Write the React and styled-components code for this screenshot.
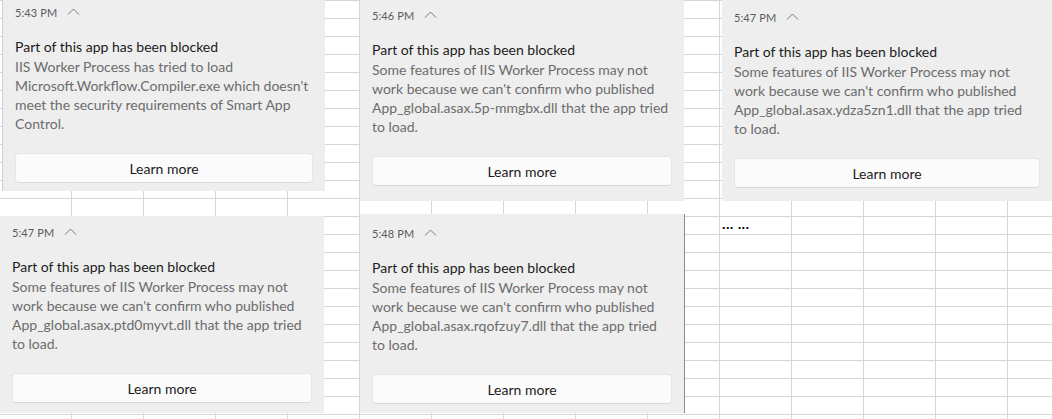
import React from "react";
import styled, { createGlobalStyle } from "styled-components";

const Global = createGlobalStyle`
  html, body { margin: 0; padding: 0; background: #ffffff; }
  body { width: 1052px; height: 419px; overflow: hidden; }
  #root { width: 1052px; height: 419px; }
`;

const GRID = "#d6d6d6";

/* Spreadsheet backdrop: 72px columns, 18px rows */
const Sheet = styled.div`
  width: 1052px;
  height: 419px;
  box-sizing: border-box;
  background-color: #ffffff;
  background-image:
    linear-gradient(to bottom, ${GRID} 0 1px, transparent 1px 18px),
    linear-gradient(to right, ${GRID} 0 1px, transparent 1px 72px);
  background-size: 100% 18px, 72px 100%;
  background-position: 0 0, 71px 0;
  display: grid;
  grid-template-columns: 360px 362px 330px;
  grid-template-rows: 214px 205px;
  align-items: start;
  font-family: "Segoe UI", Lato, "Noto Sans", sans-serif;
  overflow: hidden;
`;

const Card = styled.section`
  box-sizing: border-box;
  width: ${(p) => p.$w}px;
  height: ${(p) => p.$h}px;
  margin-left: ${(p) => p.$ml || 0}px;
  margin-top: ${(p) => p.$mt || 0}px;
  padding: ${(p) => p.$pt}px 12px 0 12px;
  background: #eeeeee;
  border-left: ${(p) => (p.$leftEdge ? "1px solid #cfcfcf" : "none")};
  border-right: ${(p) => (p.$rightEdge ? `1px solid ${p.$rightEdge}` : "none")};
  display: flex;
  flex-direction: column;
  overflow: hidden;
`;

const TimeRow = styled.div`
  display: flex;
  align-items: center;
  gap: 10px;
  height: 16px;
  font-size: 11px;
  color: #5a5a5a;
  letter-spacing: 0.1px;
`;

const Chevron = styled.svg`
  width: 13px;
  height: 7px;
  flex: none;
  margin-top: -1px;
`;

const Title = styled.h3`
  margin: 17px 0 0 0;
  font-size: 14px;
  line-height: 20px;
  font-weight: 400;
  color: #1b1b1b;
  white-space: nowrap;
`;

const Body = styled.p`
  margin: 0;
  font-size: 14px;
  line-height: 19px;
  color: #6c6c6c;
`;

const Line = styled.span`
  display: block;
  white-space: nowrap;
`;

const LearnButton = styled.button`
  margin-top: 20px;
  height: 30px;
  width: 100%;
  flex: none;
  box-sizing: border-box;
  border: 1px solid #e6e6e6;
  border-bottom-color: #d8d8d8;
  border-radius: 4px;
  background: #fbfbfb;
  font-family: inherit;
  font-size: 14px;
  color: #1b1b1b;
  padding: 0;
  cursor: pointer;
`;

const CellNote = styled.div`
  margin-top: 4px;
  font-family: "Liberation Sans", Arial, sans-serif;
  font-size: 13px;
  font-weight: 700;
  line-height: 14px;
  color: #000000;
  letter-spacing: 0.3px;
`;

const notices = [
  {
    time: "5:43 PM",
    lines: [
      "IIS Worker Process has tried to load",
      "Microsoft.Workflow.Compiler.exe which doesn't",
      "meet the security requirements of Smart App",
      "Control.",
    ],
    box: { $w: 323, $h: 191, $ml: 2, $pt: 4, $leftEdge: true },
  },
  {
    time: "5:46 PM",
    dll: "App_global.asax.5p-mmgbx.dll",
    box: { $w: 324, $h: 201, $pt: 7 },
  },
  {
    time: "5:47 PM",
    dll: "App_global.asax.ydza5zn1.dll",
    box: { $w: 330, $h: 201, $pt: 9 },
  },
  {
    time: "5:47 PM",
    dll: "App_global.asax.ptd0myvt.dll",
    box: { $w: 324, $h: 197, $mt: 2, $pt: 8 },
  },
  {
    time: "5:48 PM",
    dll: "App_global.asax.rqofzuy7.dll",
    box: { $w: 325, $h: 199, $pt: 11, $rightEdge: "#8c8c8c" },
  },
];

const bodyFor = (n) =>
  n.lines || [
    "Some features of IIS Worker Process may not",
    "work because we can't confirm who published",
    `${n.dll} that the app tried`,
    "to load.",
  ];

function Notification({ n }) {
  return (
    <Card {...n.box}>
      <TimeRow>
        <span>{n.time}</span>
        <Chevron viewBox="0 0 13 7" fill="none">
          <path d="M1 6.5 L6.5 1 L12 6.5" stroke="#7a7a7a" strokeWidth="1" />
        </Chevron>
      </TimeRow>
      <Title>Part of this app has been blocked</Title>
      <Body>
        {bodyFor(n).map((l, i) => (
          <Line key={i}>{l}</Line>
        ))}
      </Body>
      <LearnButton type="button">Learn more</LearnButton>
    </Card>
  );
}

export default function App() {
  return (
    <>
      <Global />
      <Sheet>
        {notices.map((n, i) => (
          <Notification key={i} n={n} />
        ))}
        <CellNote>... ...</CellNote>
      </Sheet>
    </>
  );
}
